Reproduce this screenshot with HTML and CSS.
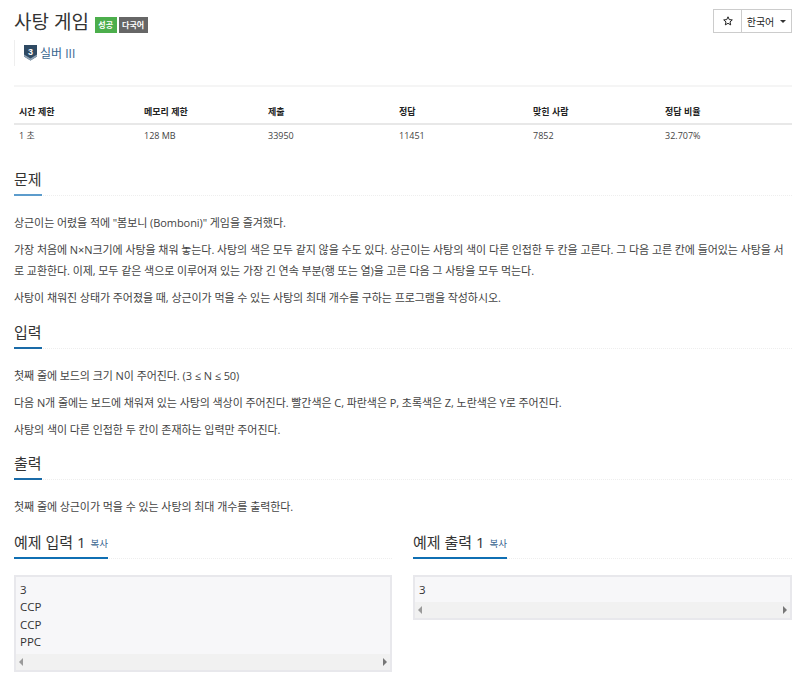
FILE: index.html
```html
<!DOCTYPE html>
<html lang="ko">
<head>
<meta charset="utf-8">
<title>사탕 게임</title>
<link rel="stylesheet" href="styles.css">
</head>
<body>
<div class="page">
  <div class="top">
    <div class="title-col">
      <div class="title-row">
        <h1 class="title">사탕 게임</h1>
        <span class="label green">성공</span>
        <span class="label grey">다국어</span>
      </div>
      <div class="tier">
        <svg class="tier-icon" width="13" height="16" viewBox="0 0 13 16"><path d="M0 0h13v11.500l-6.500 4-6.500-4z" fill="#2f4a63"/><path d="M0 9.500l6.500 4 6.500-4v2l-6.500 4-6.500-4z" fill="#8ea2b4"/><text x="6.500" y="9.500" text-anchor="middle" class="tier-num">3</text></svg>
        <span>실버 III</span>
      </div>
    </div>
    <div class="btn-group">
      <span class="btn star"><svg width="10" height="10" viewBox="0 0 10 10"><path d="M5 .8l1.250 2.800 3.050.3-2.300 2 .7 3-2.700-1.600-2.700 1.600.7-3-2.300-2 3.050-.3z" fill="none" stroke="#222" stroke-width="1"/></svg></span>
      <span class="btn lang">한국어<i class="caret"></i></span>
    </div>
  </div>
  <hr class="rule">
  <div class="stats">
    <div class="th">시간 제한</div><div class="th">메모리 제한</div><div class="th">제출</div><div class="th">정답</div><div class="th">맞힌 사람</div><div class="th">정답 비율</div>
    <div class="td">1 초</div><div class="td">128 MB</div><div class="td">33950</div><div class="td">11451</div><div class="td">7852</div><div class="td">32.707%</div>
  </div>
  <section class="sec first">
    <div class="head"><h2>문제</h2></div>
    <p>상근이는 어렸을 적에 "봄보니 (Bomboni)" 게임을 즐겨했다.</p>
    <p>가장 처음에 N×N크기에 사탕을 채워 놓는다. 사탕의 색은 모두 같지 않을 수도 있다. 상근이는 사탕의 색이 다른 인접한 두 칸을 고른다. 그 다음 고른 칸에 들어있는 사탕을 서로 교환한다. 이제, 모두 같은 색으로 이루어져 있는 가장 긴 연속 부분(행 또는 열)을 고른 다음 그 사탕을 모두 먹는다.</p>
    <p>사탕이 채워진 상태가 주어졌을 때, 상근이가 먹을 수 있는 사탕의 최대 개수를 구하는 프로그램을 작성하시오.</p>
  </section>
  <section class="sec">
    <div class="head"><h2>입력</h2></div>
    <p>첫째 줄에 보드의 크기 N이 주어진다. (3 ≤ N ≤ 50)</p>
    <p>다음 N개 줄에는 보드에 채워져 있는 사탕의 색상이 주어진다. 빨간색은 C, 파란색은 P, 초록색은 Z, 노란색은 Y로 주어진다.</p>
    <p>사탕의 색이 다른 인접한 두 칸이 존재하는 입력만 주어진다.</p>
  </section>
  <section class="sec">
    <div class="head"><h2>출력</h2></div>
    <p>첫째 줄에 상근이가 먹을 수 있는 사탕의 최대 개수를 출력한다.</p>
  </section>
  <div class="samples">
    <div class="sample">
      <div class="head big"><h2>예제 입력 1<a class="copy">복사</a></h2></div>
      <div class="pre">
        <div class="pre-text">3<br>CCP<br>CCP<br>PPC</div>
        <div class="bar"><i class="arr l"></i><i class="arr r"></i></div>
      </div>
    </div>
    <div class="sample">
      <div class="head big"><h2>예제 출력 1<a class="copy">복사</a></h2></div>
      <div class="pre">
        <div class="pre-text">3</div>
        <div class="bar"><i class="arr l"></i><i class="arr r"></i></div>
      </div>
    </div>
  </div>
</div>
</body>
</html>
```
FILE: styles.css
```css
* { box-sizing: border-box; }
html, body { margin: 0; padding: 0; background: #fff; }
body {
  font-family: "Open Sans", "Noto Sans CJK KR", sans-serif;
  font-size: 11px;
  color: #333;
  height: 680px;
  overflow: hidden;
}
.page { padding: 0 8px 0 14px; }
.top { display: flex; justify-content: space-between; align-items: flex-start; height: 85px; padding-top: 8px; }
.title-row { display: flex; align-items: flex-start; gap: 2px; height: 32px; }
.title { margin: 0 4px 0 0; font-size: 19px; font-weight: 400; line-height: 28px; color: #333; }
.label { display: block; height: 16px; padding: 0 3.5px; font-size: 8px; line-height: 16px; font-weight: 700; color: #fff; margin-top: 9px; }
.green { background: #4cae4c; }
.grey { background: #666; }
.tier { display: flex; align-items: center; gap: 3px; height: 26px; padding-left: 9px; border-left: 1px solid #eee; font-size: 12px; color: #37648f; }
.tier-num { font: 700 9px "Liberation Sans", sans-serif; fill: #fff; }
.btn-group { display: flex; height: 24px; margin-top: 1px; }
.btn { display: flex; align-items: center; justify-content: center; border: 1px solid #ccc; font-size: 10px; color: #222; }
.star { width: 28px; border-right: 0; }
.lang { width: 51px; gap: 6px; }
.caret { width: 0; height: 0; border-left: 3px solid transparent; border-right: 3px solid transparent; border-top: 3px solid #333; }
.rule { margin: 0; height: 2px; border: 0; background: #f5f5f5; }
.stats { display: grid; grid-template-columns: 125px 124px 131px 134px 132px 132px; margin-top: 15px; font-size: 9px; }
.th { height: 23px; padding: 0 5px; line-height: 19px; font-weight: 700; color: #222; border-bottom: 2px solid #e8e8e8; }
.td { height: 21px; padding: 0 5px; line-height: 22px; color: #444; }
.sec.first { margin-top: 23px; }
.sec { margin-top: 13.5px; }
.head { height: 27px; border-bottom: 1px dotted #eee; margin-bottom: 16px; }
.head h2 { display: inline-block; margin: 0; height: 27px; font-size: 15px; font-weight: 400; line-height: 21px; color: #333; border-bottom: 2px solid #1a6ba8; }
.first .head h2 { border-bottom-color: #5c9ccc; }
p { margin: 0 0 6px; line-height: 21px; color: #444; letter-spacing: -0.07px; }
.samples { display: grid; grid-template-columns: 378px 379px; column-gap: 21px; margin-top: 10px; }
.head.big { height: 32px; margin-bottom: 16px; }
.head.big h2 { height: 32px; line-height: 30px; border-bottom-color: #0f6fb3; }
.copy { font-size: 9.5px; color: #37648f; margin-left: 5px; vertical-align: 1px; }
.pre { border: 2px solid #e8e8ec; background: #f7f7f9; }
.pre-text { padding: 4px; font-size: 11.5px; line-height: 17.3px; color: #333; }
.bar { display: flex; justify-content: space-between; align-items: center; height: 16px; padding: 0 3px; background: #f1f1f1; }
.arr { width: 0; height: 0; border-top: 4px solid transparent; border-bottom: 4px solid transparent; }
.arr.l { border-right: 4px solid #9a9a9a; }
.arr.r { border-left: 4px solid #777; }
```
